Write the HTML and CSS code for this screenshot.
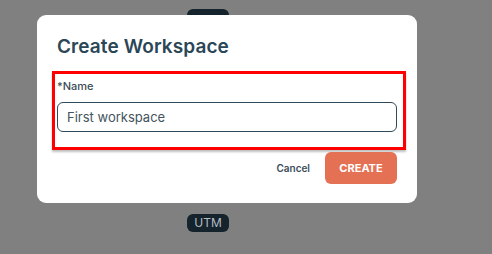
FILE: index.html
```html
<!DOCTYPE html>
<html>
<head>
<meta charset="utf-8">
<link rel="stylesheet" href="styles.css">
</head>
<body>
<div class="page">
  <div class="pill pill-top"></div>
  <div class="pill pill-bottom">UTM</div>
</div>
<div class="modal">
  <h2 class="title">Create Workspace</h2>
  <div class="highlight">
    <label class="label">*Name</label>
    <div class="input">First workspace</div>
  </div>
  <div class="actions">
    <span class="cancel">Cancel</span>
    <span class="create">CREATE</span>
  </div>
</div>
</body>
</html>
```
FILE: styles.css
```css
html, body {
  margin: 0;
  padding: 0;
  width: 492px;
  height: 254px;
  background: #808080;
  overflow: hidden;
  font-family: Inter, "Noto Sans", sans-serif;
}
.page {
  display: flex;
  flex-direction: column;
  align-items: flex-start;
  padding: 9px 0 0 187px;
}
.pill {
  width: 42px;
  height: 18px;
  border-radius: 6px;
  background: #15232d;
  color: #b4bcc2;
  font-size: 12px;
  line-height: 18px;
  text-align: center;
}
.pill-bottom {
  margin-top: 187px;
}
.modal {
  position: absolute;
  left: 37px;
  top: 15px;
  width: 380px;
  height: 188px;
  box-sizing: border-box;
  padding: 21px 20px 19px;
  background: #ffffff;
  border-radius: 9px;
  display: flex;
  flex-direction: column;
}
.title {
  margin: 0;
  font-size: 19px;
  line-height: 22px;
  font-weight: 600;
  letter-spacing: 0.1px;
  color: #2b4656;
}
.highlight {
  margin: 13px -9px 0 -5px;
  border: 3px solid #ff0000;
  padding: 5px 6px 15px 2px;
  box-shadow: 0 2px 2px rgba(0, 0, 0, 0.25);
  display: flex;
  flex-direction: column;
}
.label {
  font-size: 11px;
  line-height: 14px;
  font-weight: 500;
  color: #3b4a55;
}
.input {
  margin-top: 9px;
  height: 30px;
  box-sizing: border-box;
  border: 1px solid #2f4a5a;
  border-radius: 6px;
  padding: 0 9px;
  font-size: 13px;
  line-height: 28px;
  color: #44535d;
}
.actions {
  margin-top: 2px;
  display: flex;
  justify-content: flex-end;
  align-items: center;
  gap: 15px;
}
.cancel {
  font-size: 10px;
  font-weight: 600;
  color: #3b4d5a;
}
.create {
  width: 72px;
  height: 32px;
  border-radius: 6px;
  background: #e57154;
  color: #ffffff;
  font-size: 11px;
  font-weight: 700;
  line-height: 32px;
  text-align: center;
}
```
